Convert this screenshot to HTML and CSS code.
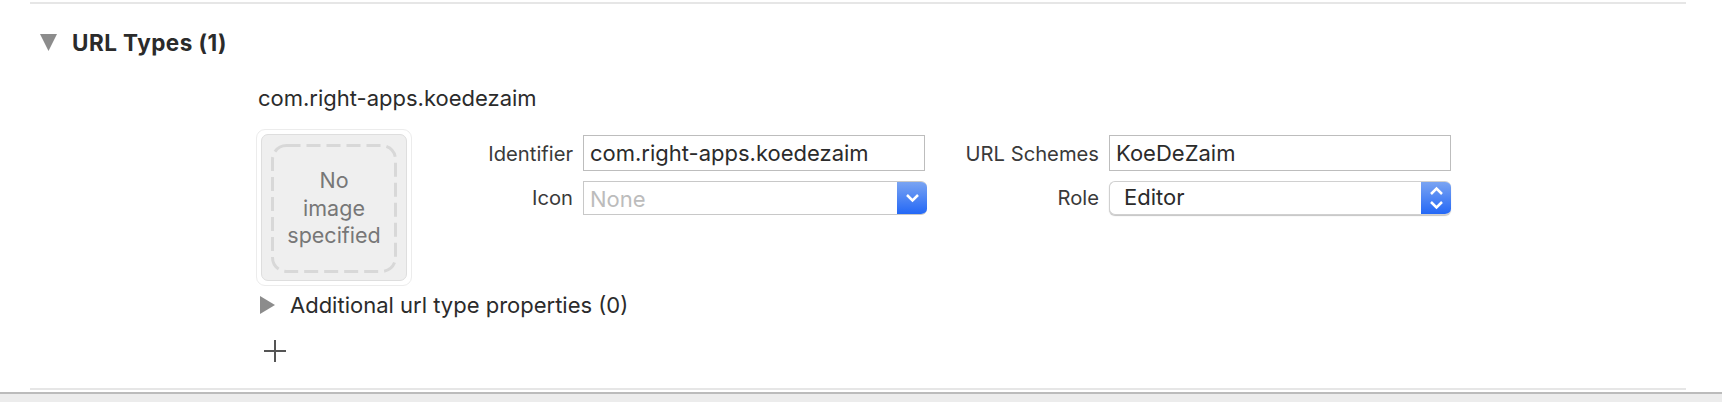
FILE: index.html
```html
<!DOCTYPE html>
<html lang="en">

<head>
	<meta charset="UTF-8">
	<title>URL Types</title>
	<link rel="stylesheet" href="styles.css">
</head>

<body>
	<div class="panel">
		<div class="section">
			<div class="head">
				<svg class="arrow-down" width="17" height="17" viewBox="0 0 17 17"><path d="M0 0H17L8.5 17Z" /></svg>
				<strong>URL Types (1)</strong>
			</div>
			<div class="body">
				<p class="name">com.right-apps.koedezaim</p>
				<div class="row">
					<div class="well">
						<div class="well-in">
							<div class="dash">
								<svg class="dash-line" width="126" height="129" viewBox="0 0 126 129"><rect x="1.5" y="1.5" width="123" height="126" rx="14" /></svg>
								No<br>image<br>specified
							</div>
						</div>
					</div>
					<div class="form">
						<span class="lbl">Identifier</span>
						<div class="field">com.right-apps.koedezaim</div>
						<span class="lbl">URL Schemes</span>
						<div class="field">KoeDeZaim</div>
						<span class="lbl">Icon</span>
						<div class="combo">
							<span class="combo-txt">None</span>
							<span class="btn">
								<svg width="15" height="10" viewBox="0 0 15 10"><path d="M2 2L7.5 7.5L13 2" /></svg>
							</span>
						</div>
						<span class="lbl">Role</span>
						<div class="popup">
							<span class="popup-txt">Editor</span>
							<span class="btn">
								<svg width="15" height="28" viewBox="0 0 15 28"><path d="M2 10L7.5 4.5L13 10" /><path d="M2 18L7.5 23.5L13 18" /></svg>
							</span>
						</div>
					</div>
				</div>
				<div class="more">
					<svg class="arrow-right" width="15" height="18" viewBox="0 0 15 18"><path d="M0 0L15 9L0 18Z" /></svg>
					<span>Additional url type properties (0)</span>
				</div>
				<svg class="plus" width="22" height="22" viewBox="0 0 22 22"><path d="M0 11H22M11 0V22" /></svg>
			</div>
		</div>
	</div>
	<div class="bar"></div>
</body>

</html>
```

FILE: styles.css
```css
* {
	margin: 0;
	padding: 0;
	box-sizing: border-box;
}

body {
	width: 1722px;
	height: 402px;
	overflow: hidden;
	background: #fff;
	font-family: Inter, "Liberation Sans", sans-serif;
	color: #2b2b2b;
	display: flex;
	flex-direction: column;
}

.panel {
	flex: 1;
	padding: 2px 36px 2px 30px;
	display: flex;
}

.section {
	flex: 1;
	border-top: 2px solid #e6e6e6;
	border-bottom: 2px solid #e6e6e6;
}

.head {
	display: flex;
	align-items: center;
	height: 28px;
	margin-top: 24px;
	padding-left: 10px;
	font-size: 22.5px;
}
.head strong {
	margin-left: 15px;
	font-weight: 700;
	letter-spacing: .45px;
}
.arrow-down path,
.arrow-right path {
	fill: #8c8c8c;
}

.body {
	padding-left: 226px;
}

.name {
	font-size: 22px;
	line-height: 24px;
	margin: 30px 0 0 2px;
}

.row {
	display: flex;
	margin-top: 19px;
}

.well {
	width: 156px;
	height: 157px;
	padding: 4px;
	border: 1px solid #ececec;
	border-radius: 9px;
}
.well-in {
	height: 100%;
	padding: 9px;
	background: #efefef;
	border: 1px solid #dedede;
	border-radius: 7px;
}
.dash {
	position: relative;
	height: 129px;
	display: flex;
	align-items: center;
	justify-content: center;
	text-align: center;
	font-size: 21.5px;
	line-height: 27.5px;
	color: #777;
}
.dash-line {
	position: absolute;
	top: 0;
	left: 0;
}
.dash-line rect {
	fill: none;
	stroke: #d8d8d8;
	stroke-width: 3;
	stroke-dasharray: 14 6;
}

.form {
	display: grid;
	grid-template-columns: 161px 344px 162px 342px;
	grid-template-rows: 36px 35px;
	column-gap: 10px;
	row-gap: 9px;
	margin-top: 6px;
	align-items: center;
	font-size: 22px;
	height: 80px;
}

.lbl {
	text-align: right;
	color: #3a3a3a;
	font-size: 20.2px;
}

.field {
	height: 36px;
	width: 342px;
	line-height: 34px;
	padding-left: 6px;
	border: 1px solid #bdbdbd;
	background: #fff;
}

.combo,
.popup {
	display: flex;
	height: 34px;
	background: #fff;
	overflow: hidden;
}
.combo {
	border: 1px solid #c8c8c8;
	border-right: 0;
	border-radius: 0 6px 6px 0;
}
.combo-txt {
	flex: 1;
	line-height: 35px;
	padding-left: 6px;
	color: #bcbcbc;
}
.popup {
	border: 1px solid #d0d0d0;
	border-right: 0;
	border-radius: 6px;
	box-shadow: 0 1px 1px #c4c4c4;
}
.popup-txt {
	flex: 1;
	line-height: 31px;
	padding-left: 14px;
}

.btn {
	width: 30px;
	display: flex;
	align-items: center;
	justify-content: center;
	background: linear-gradient(#7aa4f2, #2468f6);
}
.btn path {
	fill: none;
	stroke: #fff;
	stroke-width: 2.5;
}

.more {
	display: flex;
	align-items: center;
	height: 22px;
	margin-top: 8px;
	padding-left: 4px;
	font-size: 22px;
}
.more span {
	margin-left: 15px;
}

.plus {
	display: block;
	margin: 24px 0 0 8px;
}
.plus path {
	fill: none;
	stroke: #555;
	stroke-width: 2;
}

.bar {
	height: 10px;
	border-top: 2px solid #bbb;
	background: #ececec;
}
```
